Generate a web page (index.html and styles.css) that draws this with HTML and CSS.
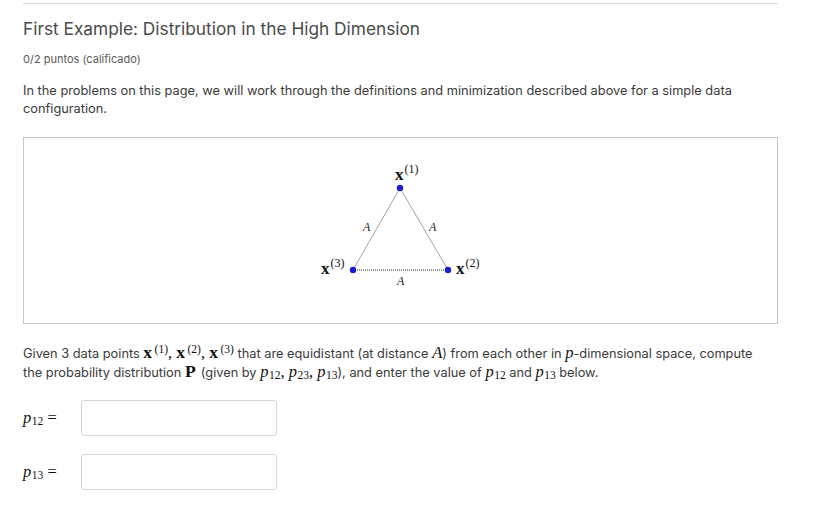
FILE: index.html
```html
<!DOCTYPE html>
<html>
<head>
<meta charset="utf-8">
<link rel="stylesheet" href="styles.css">
</head>
<body>
<div class="page">
  <div class="rule"></div>
  <h2 class="title">First Example: Distribution in the High Dimension</h2>
  <div class="points">0/2 puntos (calificado)</div>
  <p class="text intro">In the problems on this page, we will work through the definitions and minimization described above for a simple data configuration.</p>
  <div class="figure">
    <svg width="200" height="186" viewBox="0 0 200 186">
      <line x1="99" y1="50" x2="52" y2="132" stroke="#8a8a8a" stroke-width="0.8"/>
      <line x1="99" y1="50" x2="147" y2="132" stroke="#8a8a8a" stroke-width="0.8"/>
      <line x1="52" y1="132" x2="147" y2="132" stroke="#333" stroke-width="1" stroke-dasharray="1 1"/>
      <circle cx="99" cy="50" r="3.2" fill="#1c1cd6"/>
      <circle cx="52" cy="132" r="3.2" fill="#1c1cd6"/>
      <circle cx="147" cy="132" r="3.2" fill="#1c1cd6"/>
      <text class="vx" x="94" y="42">x<tspan class="sup" dx="1" dy="-7">(1)</tspan></text>
      <text class="vx" x="20" y="136">x<tspan class="sup" dx="1" dy="-7">(3)</tspan></text>
      <text class="vx" x="155" y="136">x<tspan class="sup" dx="1" dy="-7">(2)</tspan></text>
      <text class="va" x="62" y="93">A</text>
      <text class="va" x="128" y="93">A</text>
      <text class="va" x="96" y="147">A</text>
    </svg>
  </div>
  <p class="text given">Given 3 data points <span class="m"><b>x</b><sup>(1)</sup>, <b>x</b><sup>(2)</sup>, <b>x</b><sup>(3)</sup></span> that are equidistant (at distance <span class="m"><i>A</i></span>) from each other in <span class="m"><i>p</i></span>-dimensional space, compute the probability distribution <span class="m"><b>P</b></span> (given by <span class="m"><i>p</i><sub>12</sub>, <i>p</i><sub>23</sub>, <i>p</i><sub>13</sub></span>), and enter the value of <span class="m"><i>p</i><sub>12</sub></span> and <span class="m"><i>p</i><sub>13</sub></span> below.</p>
  <div class="answer">
    <span class="label m"><i>p</i><sub>12</sub> =</span>
    <input class="field" type="text">
  </div>
  <div class="answer">
    <span class="label m"><i>p</i><sub>13</sub> =</span>
    <input class="field" type="text">
  </div>
</div>
</body>
</html>
```
FILE: styles.css
```css
html, body {
  margin: 0;
  padding: 0;
  background: #fff;
}
.page {
  margin-left: 23px;
  width: 755px;
  font-family: Inter, "Open Sans", sans-serif;
  color: #3a3a3a;
}
.rule {
  height: 1px;
  background: #dcdcdc;
  margin-top: 3px;
}
.title {
  margin: 13px 0 0;
  font-size: 17.3px;
  font-weight: 400;
  line-height: 24px;
  color: #4a4a4a;
}
.points {
  margin-top: 10px;
  font-size: 11px;
  line-height: 16px;
  color: #5a5a5a;
}
.text {
  font-size: 12.8px;
  line-height: 18px;
  margin: 0;
}
.intro {
  margin-top: 15px;
}
.figure {
  margin-top: 19px;
  height: 185px;
  border: 1px solid #c8c8c8;
  display: flex;
  justify-content: center;
}
.figure svg {
  display: block;
}
.vx {
  font-family: "Liberation Serif", "DejaVu Serif", serif;
  font-weight: 700;
  font-size: 17px;
  fill: #111;
}
.vx .sup {
  font-weight: 400;
  font-size: 12px;
}
.va {
  font-family: "Liberation Serif", "DejaVu Serif", serif;
  font-style: italic;
  font-size: 12px;
  fill: #222;
}
.given {
  margin-top: 20px;
  padding-right: 6px;
}
.m {
  font-family: "Liberation Serif", "DejaVu Serif", serif;
  font-size: 16.5px;
  color: #111;
  line-height: 1;
}
.m b {
  font-size: 17.5px;
  margin-right: 1.5px;
}
.m sup, .m sub {
  font-size: 11.5px;
  line-height: 1;
}
.m sup {
  vertical-align: 5px;
  margin-left: 1px;
}
.m sub {
  vertical-align: -2px;
  margin-left: 0.5px;
}
.answer {
  display: flex;
  align-items: center;
  margin-top: 18px;
}
.label {
  width: 58px;
  line-height: 18px;
}
.field {
  width: 196px;
  height: 36px;
  box-sizing: border-box;
  border: 1px solid #d6d6d6;
  border-radius: 3px;
  margin: 0;
  padding: 0 8px;
}
```
